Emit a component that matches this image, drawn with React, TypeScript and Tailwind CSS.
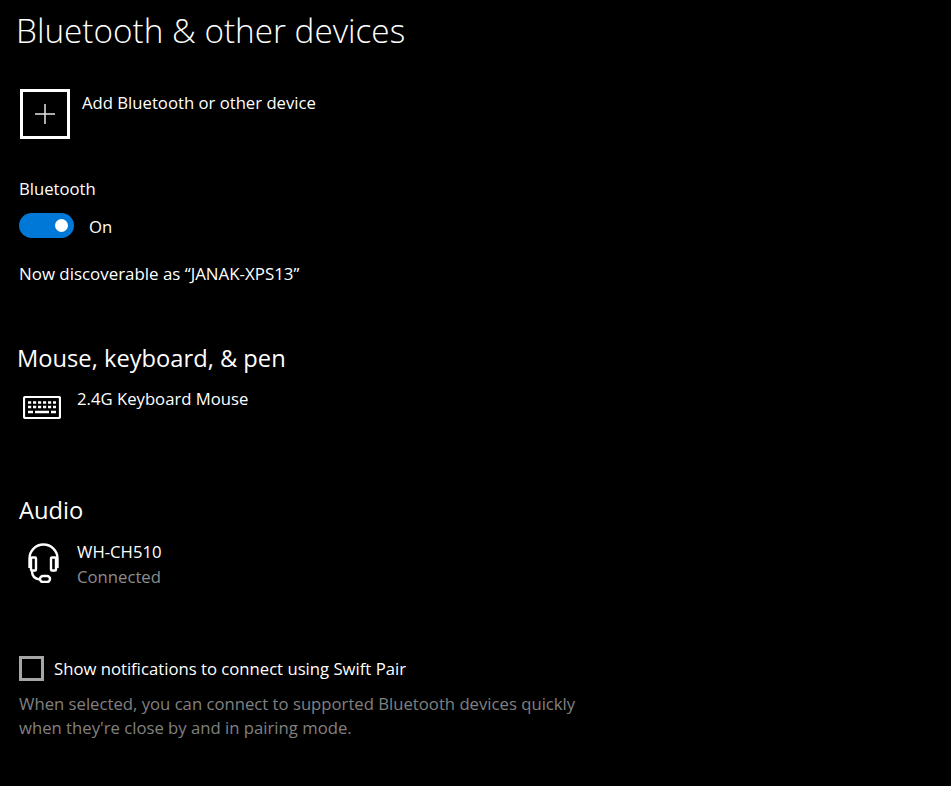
import React from 'react';

const font = "font-['Open_Sans',sans-serif]";

const KeyboardIcon = () => (
  <svg width="38" height="23" viewBox="0 0 38 23" fill="none" stroke="white">
    <rect x="1" y="1" width="36" height="21" rx="1.500" strokeWidth="2.200" />
    <path d="M5 6.500h28M5 11h28" strokeWidth="2.500" strokeDasharray="3.200 1.800" />
    <path d="M5 16h5M12 16h14M28 16h5" strokeWidth="2.500" />
  </svg>
);

const HeadsetIcon = () => (
  <svg width="31" height="40" viewBox="0 0 31 40" fill="none" stroke="white" strokeWidth="2.400">
    <path d="M1.500 25V15.500a14 14 0 0 1 28 0V25" />
    <rect x="3" y="14.500" width="5" height="13" rx="1" />
    <rect x="23" y="14.500" width="5" height="13" rx="1" />
    <path d="M4 28c0 5.500 3 8 8 8.500" />
    <rect x="12" y="33" width="10" height="6" rx="3" />
  </svg>
);

export default function App() {
  return (
    <div className={`h-[786px] w-[951px] overflow-hidden bg-black text-white ${font}`}>
      <div className="pl-[19px]">
        <h1 className="-ml-[3px] pt-[9px] text-[33.300px] leading-[42px] font-light">Bluetooth &amp; other devices</h1>

        <div className="mt-[38px] ml-px flex items-start gap-3">
          <div className="flex h-[50px] w-[50px] items-center justify-center border-[3px] border-white">
            <svg width="20" height="20" viewBox="0 0 20 20" stroke="#e5e5e5" strokeWidth="1.500">
              <path d="M10 0v20M0 10h20" />
            </svg>
          </div>
          <span className="pt-[2px] text-[16.700px] leading-6">Add Bluetooth or other device</span>
        </div>

        <div className="mt-[38px] text-[16.700px] leading-6">Bluetooth</div>
        <div className="mt-[12px] flex items-start gap-[15px]">
          <div className="flex h-[25px] w-[55px] items-center justify-end rounded-full bg-[#0078d7] pr-[6px]">
            <div className="h-[13px] w-[13px] rounded-full bg-white" />
          </div>
          <span className="pt-[2px] text-[16.700px] leading-6">On</span>
        </div>
        <div className="mt-[23px] text-[16.900px] leading-6">Now discoverable as “JANAK-XPS13”</div>

        <h2 className="-ml-[2px] mt-[56px] text-[23.700px] leading-8 font-normal">Mouse, keyboard, &amp; pen</h2>
        <div className="mt-[13px] flex items-start">
          <div className="mt-[9px] ml-[4px] h-[23px] w-[54px]">
            <KeyboardIcon />
          </div>
          <span className="text-[16.700px] leading-6">2.4G Keyboard Mouse</span>
        </div>

        <h2 className="mt-[75px] text-[23.700px] leading-8 font-normal">Audio</h2>
        <div className="mt-[13px] flex items-start">
          <div className="mt-[4px] ml-[9px] w-[49px]">
            <HeadsetIcon />
          </div>
          <div className="text-[16.700px] leading-[25px]">
            <div>WH-CH510</div>
            <div className="text-[#8c8c8c]">Connected</div>
          </div>
        </div>

        <div className="mt-[67px] flex items-center gap-[10px]">
          <div className="h-[25px] w-[25px] border-[3px] border-[#a6a6a6]" />
          <span className="text-[16.700px] leading-6">Show notifications to connect using Swift Pair</span>
        </div>
        <p className="mt-[11px] w-[600px] text-[16.700px] leading-[24px] text-[#808080]">
          When selected, you can connect to supported Bluetooth devices quickly
          <br />
          when they're close by and in pairing mode.
        </p>
      </div>
    </div>
  );
}
